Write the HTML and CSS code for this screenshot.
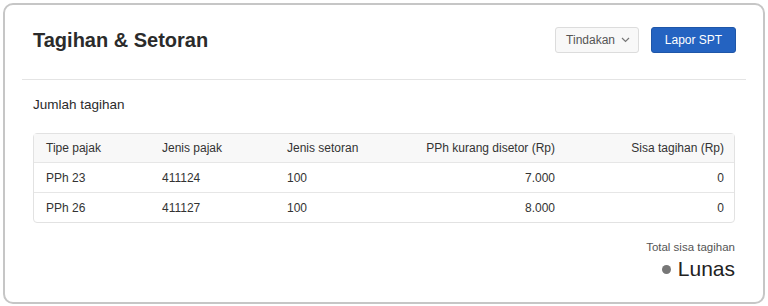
FILE: index.html
```html
<!DOCTYPE html>
<html lang="id">
<head>
  <meta charset="UTF-8">
  <meta name="viewport" content="width=device-width, initial-scale=1.0">
  <title>Tagihan &amp; Setoran</title>
  <link rel="stylesheet" href="styles.css">
</head>
<body>
  <div class="card">
    <div class="card-head">
      <h1 class="title">Tagihan &amp; Setoran</h1>
      <div class="actions">
        <button class="btn btn-light">Tindakan
          <svg class="caret" width="9" height="6" viewBox="0 0 9 6"><path d="M1 1l3.5 3.5L8 1" fill="none" stroke="#777" stroke-width="1.2"/></svg>
        </button>
        <button class="btn btn-primary">Lapor SPT</button>
      </div>
    </div>

    <div class="card-body">
      <h2 class="section-title">Jumlah tagihan</h2>

      <table class="bills">
        <colgroup>
          <col class="c1"><col class="c2"><col class="c3"><col class="c4"><col class="c5">
        </colgroup>
        <thead>
          <tr>
            <th>Tipe pajak</th>
            <th>Jenis pajak</th>
            <th>Jenis setoran</th>
            <th class="num">PPh kurang disetor (Rp)</th>
            <th class="num">Sisa tagihan (Rp)</th>
          </tr>
        </thead>
        <tbody>
          <tr>
            <td>PPh 23</td>
            <td>411124</td>
            <td>100</td>
            <td class="num">7.000</td>
            <td class="num">0</td>
          </tr>
          <tr>
            <td>PPh 26</td>
            <td>411127</td>
            <td>100</td>
            <td class="num">8.000</td>
            <td class="num">0</td>
          </tr>
        </tbody>
      </table>

      <div class="total">
        <div class="total-label">Total sisa tagihan</div>
        <div class="total-status"><span class="dot"></span>Lunas</div>
      </div>
    </div>
  </div>
</body>
</html>
```

FILE: styles.css
```css
body {
  margin: 0;
  background: #fff;
  font-family: "Liberation Sans", Arial, sans-serif;
  color: #333;
}

.card {
  margin: 3px;
  width: 758px;
  height: 297px;
  border: 2px solid #c6c6c6;
  border-radius: 10px;
  background: #fff;
}

.card-head {
  display: flex;
  justify-content: space-between;
  align-items: center;
  margin: 0 17px;
  padding: 22px 10px 26px 11px;
  border-bottom: 1px solid #e4e4e4;
}

.title {
  margin: 0;
  font-size: 20px;
  font-weight: bold;
  color: #2b2b2b;
}

.actions {
  display: flex;
  gap: 12px;
}

.btn {
  height: 26px;
  font-family: inherit;
  font-size: 12px;
  border-radius: 3px;
  cursor: pointer;
}

.btn-light {
  display: flex;
  align-items: center;
  gap: 6px;
  padding: 0 8px 0 10px;
  background: #f8f8f8;
  border: 1px solid #dcdcdc;
  color: #555;
}

.btn-primary {
  width: 85px;
  background: #2463c1;
  border: 1px solid #1f56a8;
  color: #fff;
}

.card-body {
  padding: 0 28px;
}

.section-title {
  margin: 0;
  padding: 17px 0 21px;
  font-size: 13.5px;
  font-weight: normal;
  color: #2b2b2b;
}

.bills {
  width: 702px;
  table-layout: fixed;
  border-collapse: separate;
  border-spacing: 0;
  border: 1px solid #e2e2e2;
  border-radius: 4px;
  font-size: 12px;
}

.bills col.c1 { width: 116px; }
.bills col.c2 { width: 125px; }
.bills col.c3 { width: 127px; }
.bills col.c4 { width: 163px; }
.bills col.c5 { width: 169px; }

.bills th,
.bills td {
  height: 29px;
  padding: 0 10px 0 12px;
  text-align: left;
  font-weight: normal;
  color: #333;
}

.bills th {
  background: #f8f8f8;
  height: 28px;
}

.bills td {
  border-top: 1px solid #e6e6e6;
}

.bills .num {
  text-align: right;
}

.total {
  display: flex;
  flex-direction: column;
  align-items: flex-end;
  padding-top: 18px;
}

.total-label {
  font-size: 11.5px;
  color: #555;
}

.total-status {
  display: flex;
  align-items: center;
  gap: 7px;
  margin-top: 4px;
  font-size: 21px;
  color: #222;
}

.dot {
  width: 9px;
  height: 9px;
  border-radius: 50%;
  background: #777;
}
```
